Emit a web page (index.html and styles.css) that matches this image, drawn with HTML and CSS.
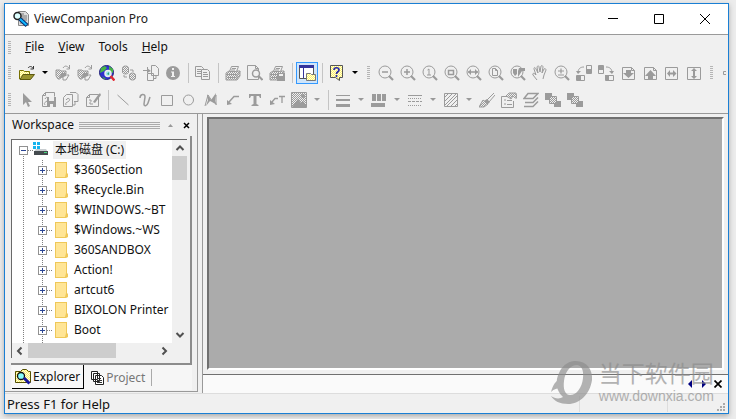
FILE: index.html
```html
<!DOCTYPE html>
<html lang="en">
<head>
<meta charset="utf-8">
<title>ViewCompanion Pro</title>
<link rel="stylesheet" href="styles.css">
</head>
<body>
<svg class="sprite" aria-hidden="true">
  <defs>
    <pattern id="dots" width="2" height="2" patternUnits="userSpaceOnUse"><path d="M0 0h1v1H0zM1 1h1v1H1z" fill="#9b9b9b"/></pattern>
    <pattern id="ydots" width="2" height="2" patternUnits="userSpaceOnUse"><path d="M0 0h2v2H0z" fill="#fffde0"/><path d="M0 0h1v1H0zM1 1h1v1H1z" fill="#fff46a"/></pattern>
    <symbol id="lens" viewBox="0 0 16 16"><circle cx="7" cy="7" r="6" fill="none" stroke="currentColor"/><path d="M11 11l4 4" stroke="currentColor" stroke-width="2.2"/></symbol>
    <symbol id="app" viewBox="0 0 16 16"><path d="M5.500.5h7l3 3v11h-10z" fill="#ddd" stroke="#888"/><path d="M8 3h3M8 5h6M9 7h5M11 9h3M7 12h3" stroke="#777"/><circle cx="4.500" cy="5" r="3.500" fill="#dff" stroke="#222" stroke-width="1.500"/><path d="M7 8l7 6.500" stroke="#002a70" stroke-width="4"/><path d="M7 8l6.500 6" stroke="#10b8ff" stroke-width="2"/></symbol>
    <symbol id="open" viewBox="0 0 16 16"><path d="M.5 14V5.500h4l1 1h5v3" fill="url(#ydots)" stroke="#777000"/><path d="M1 14.500l3-5h11.500l-4 5z" fill="#9a9430" stroke="#5c5810"/><path d="M9 3c1.500-2 4-2 5 .5M14.500 1v3h-3" fill="none" stroke="#333"/></symbol>
    <symbol id="files" viewBox="0 0 16 16"><path d="M1 5h4l1 1h5v3H7l-2 5H3l-2-3z" fill="url(#dots)" stroke="currentColor"/><path d="M5 10h9l-3 5H8V12H5zM8 3c2-3 4-2 6 0M14.500 0v4h-3" fill="none" stroke="currentColor"/><path d="M6 8h5v3l-5 2z" fill="currentColor"/></symbol>
    <symbol id="globe" viewBox="0 0 16 16"><circle cx="7.500" cy="7.500" r="7" fill="#2f2fd0" stroke="#222276"/><path d="M2 3l4-2 2 2-3 3-4 2zM10 1l4 3v4l-4-2z" fill="#45b545"/><path d="M3 11l4 3H5z" fill="#40b040"/><circle cx="9" cy="8.500" r="3" fill="#9fe8ef" stroke="#eee" stroke-width="1.500"/><path d="M8 9l2-2v3z" fill="#2aa070"/><path d="M11.500 11l4 4.500" stroke="#e22b35" stroke-width="2.500"/></symbol>
    <symbol id="cups" viewBox="0 0 16 16"><path d="M1.500 2.500c1-2 5-2 6 0v5c-1 2-5 2-6 0zM8.500 9.500c1-2 5-2 6 0v4c-1 2-5 2-6 0z" fill="url(#dots)" stroke="currentColor"/><path d="M3 10v2h3M9 5h3v2" fill="none" stroke="currentColor"/></symbol>
    <symbol id="merge" viewBox="0 0 16 16"><path d="M8.500.5h4l3 3v7h-7zM4.500 8.500h6v7h-6zM0 5.500h7M4.500 2v6M10 13.500h3v-3" fill="none" stroke="currentColor"/><path d="M4 3l4 3-4 2z" fill="currentColor"/></symbol>
    <symbol id="info" viewBox="0 0 16 16"><circle cx="8" cy="8" r="7" fill="currentColor"/><path d="M7 3h2v2H7zM6 6.500h3V11h1v1H6v-1h1V7.500H6z" fill="#f0f0f0"/></symbol>
    <symbol id="copy" viewBox="0 0 16 16"><path d="M.5 1.500h6l2 2v8h-8z" fill="#f0f0f0" stroke="currentColor"/><path d="M2 4.500h4M2 6.500h4M2 8.500h4" stroke="currentColor"/><path d="M6.500 4.500h6l2 2v8h-8z" fill="#f0f0f0" stroke="currentColor"/><path d="M8 7.500h4M8 9.500h5M8 11.500h5" stroke="currentColor"/></symbol>
    <symbol id="print" viewBox="0 0 16 16"><path d="M1 8l3-2h11v5l-3 4H1z" fill="url(#dots)" stroke="currentColor"/><path d="M4.500 6.500l2-5h7l-2 5z" fill="#f0f0f0" stroke="currentColor"/><path d="M7 3.500h4M6 5h4M1 9.500h11v5M12 9.500l3-3M2 12.500h9" stroke="currentColor" fill="none"/></symbol>
    <symbol id="preview" viewBox="0 0 16 16"><path d="M.5.5h8l3 3v11H.5zM8.500.5v3h3" fill="none" stroke="currentColor"/><circle cx="9" cy="8.500" r="3.500" fill="#f0f0f0" stroke="currentColor" stroke-width="1.500"/><path d="M11.500 11l4 4" stroke="currentColor" stroke-width="2"/></symbol>
    <symbol id="workspace" viewBox="0 0 18 16"><path d="M1.500.5h14v13h-14z" fill="#fff" stroke="#555"/><path d="M1 0h15v3H1z" fill="#34349c"/><path d="M5.500 3v10" stroke="#34349c"/><path d="M8.500 8.500h4l1 1h4v6h-9z" fill="url(#ydots)" stroke="#777"/></symbol>
    <symbol id="help" viewBox="0 0 16 16"><path d="M1.500.5h12v12h-3v3l-4-3h-5z" fill="url(#ydots)" stroke="#555"/><path d="M5 5c0-3 5-3 5 0 0 2-2.500 1.500-2.500 4M7.500 10v2" fill="none" stroke="#2828a8" stroke-width="1.700"/></symbol>
    <symbol id="hand" viewBox="0 0 16 16"><path d="M5 15l-4-5c-1-2 1-2 2-1l1 1-2-6c0-2 1-2 2 0l2 4-1-6c1-2 2-1 2 0l1 5 1-6c1-1 2 0 2 1l-1 6 2-4c1-1 2 0 2 1l-2 5-1 4" fill="none" stroke="currentColor"/></symbol>
    <symbol id="rotl" viewBox="0 0 16 16"><path d="M10.500.5h5v8h-5zM.5 10.500h8v5h-8zM2 8c0-4 2-6 6-6" fill="none" stroke="currentColor"/><path d="M10 4h5v4h-5zM1 10h4v5H1zM0 6h5L2 9z" fill="currentColor"/></symbol>
    <symbol id="rotr" viewBox="0 0 16 16"><path d="M.5.500h5v8h-5zM7.500 10.500h8v5h-8zM14 8c0-4-2-6-6-6" fill="none" stroke="currentColor"/><path d="M1 1h5v4H1zM7 10h4v5H7zM11 6h5l-2 3z" fill="currentColor"/></symbol>
    <symbol id="down" viewBox="0 0 16 16"><path d="M2.500 2.500h9l3 3v9h-12zM11.500 2.500v3h3" fill="none" stroke="currentColor"/><path d="M6 5h5v3h3l-5.500 5L3 8h3z" fill="currentColor"/></symbol>
    <symbol id="up" viewBox="0 0 16 16"><path d="M2.500 2.500h9l3 3v9h-12zM11.500 2.500v3h3" fill="none" stroke="currentColor"/><path d="M6 14h5v-3h3L8.500 5 3 11h3z" fill="currentColor"/></symbol>
    <symbol id="fitw" viewBox="0 0 16 16"><path d="M1.500 2.500h12v12h-12z" fill="none" stroke="currentColor"/><path d="M3 8.500L6 5v2.500h3V5l3.500 3.500L9 12V9.500H6V12z" fill="currentColor"/></symbol>
    <symbol id="fith" viewBox="0 0 16 16"><path d="M1.500 2.500h13v12h-13z" fill="none" stroke="currentColor"/><path d="M8 3l3 3H9v5h2l-3 3-3-3h2V6H5z" fill="currentColor"/></symbol>
    <symbol id="cursor" viewBox="0 0 16 16"><path d="M4 1v12l3-3 2 5 2-1-2-4h4z" fill="currentColor"/></symbol>
    <symbol id="savepage" viewBox="0 0 16 16"><path d="M1.500 14.500v-11l3-3h9v4M4.500.5v3h-3M1.500 14.500H6M4 7c2-4 5 0 2 2s-3 2-2 4" fill="none" stroke="currentColor"/><path d="M6 5h9v10H6z" fill="currentColor"/><path d="M8 5h5v4H8zM9 12h3v3H9z" fill="#eee"/></symbol>
    <symbol id="pages" viewBox="0 0 16 16"><path d="M.5 14.500v-9l3-3h6v12zM7 .5h6l2 2v7h-4M3 8c2-3 5-1 3 1s-4 1-3 4M12 10v3h-2" fill="none" stroke="currentColor"/></symbol>
    <symbol id="editpage" viewBox="0 0 16 16"><path d="M1.500 14.500v-9l3-3h9v12zM4.500 2.500v3h-3M4 8h2c1 2-2 2-1 4h3" fill="none" stroke="currentColor"/><path d="M8 10l5-7 2-2 1 2-6 8z" fill="currentColor"/></symbol>
    <symbol id="line" viewBox="0 0 16 16"><path d="M2.500 3l11 10" stroke="currentColor"/></symbol>
    <symbol id="curve" viewBox="0 0 16 16"><path d="M3 6c0-4 5-5 5-1L7 12c0 3 3 2 4-1l2-6" fill="none" stroke="currentColor" stroke-width="1.500"/></symbol>
    <symbol id="rect" viewBox="0 0 16 16"><path d="M2.500 3.500h11v10h-11z" fill="none" stroke="currentColor"/></symbol>
    <symbol id="ellipse" viewBox="0 0 16 16"><circle cx="7.500" cy="8" r="5" fill="none" stroke="currentColor"/></symbol>
    <symbol id="poly" viewBox="0 0 16 16"><path d="M2 14L5 3l4 6 4-6v10" fill="none" stroke="currentColor"/><path d="M4 2l4 6 5-7-1 8 2 4-5-3-2-1-4 5 2-6z" fill="currentColor"/></symbol>
    <symbol id="leader" viewBox="0 0 16 16"><path d="M14 4.500H9L4 10" fill="none" stroke="currentColor" stroke-width="1.500"/><path d="M2 13V8l5 4z" fill="currentColor"/></symbol>
    <symbol id="text" viewBox="0 0 16 16"><path d="M2 2h12v4h-1l-1-2H9.500v8l2 1v1h-7v-1l2-1V4H4L3 6H2z" fill="currentColor"/></symbol>
    <symbol id="leadert" viewBox="0 0 16 16"><path d="M9 6.500H6L3 10M10 4.500h6M13 4v7" fill="none" stroke="currentColor" stroke-width="1.300"/><path d="M1 13V8l5 4z" fill="currentColor"/></symbol>
    <symbol id="image" viewBox="0 0 16 16"><path d="M.5.500h15v15H.5z" fill="url(#dots)" stroke="currentColor"/><path d="M1 15l6-8 3 4 2-2 3 4v2z" fill="currentColor"/><circle cx="12" cy="4" r="2" fill="currentColor"/></symbol>
    <symbol id="lines" viewBox="0 0 16 16"><path d="M1 3.500h14" stroke="currentColor"/><path d="M1 8h14" stroke="currentColor" stroke-width="2"/><path d="M1 13.500h14" stroke="currentColor" stroke-width="3"/></symbol>
    <symbol id="bars" viewBox="0 0 16 16"><path d="M1 2h4v7H1zM6 2h4v7H6zM11 2h4v7h-4zM0 11h14v4H0z" fill="currentColor"/></symbol>
    <symbol id="dashes" viewBox="0 0 16 16"><path d="M1 3.500h14" stroke="currentColor"/><path d="M1 6.500h14M1 13.500h14" stroke="currentColor" stroke-dasharray="1 1"/><path d="M1 9.500h14" stroke="currentColor" stroke-dasharray="3 1"/></symbol>
    <symbol id="hatch" viewBox="0 0 16 16"><path d="M1.500 1.500h13v13h-13zM2 5l3-3M2 9l7-7M2 13L13 2M4 14L14 4M8 14l6-6M12 14l2-2" fill="none" stroke="currentColor"/></symbol>
    <symbol id="brush" viewBox="0 0 16 16"><path d="M8 8l7-7M10 10l6-7" stroke="currentColor"/><path d="M8 7l3 3-2 2-4-3z" fill="currentColor"/><path d="M4 8l5 4-4 3H0z" fill="url(#dots)" stroke="currentColor"/></symbol>
    <symbol id="props" viewBox="0 0 16 16"><path d="M6 4.500H.5v11h12V9M3 8h2M6 8.500h5M3 12h2M6 12.500h5" fill="none" stroke="currentColor"/><path d="M5 4l3-3h7l1 5h-2l-2-2-2 3-3-2z" fill="url(#dots)" stroke="currentColor"/></symbol>
    <symbol id="layers" viewBox="0 0 16 16"><path d="M5 1.500h10l-5 5H1zM2 10.500h8l5-5M1 14.500h9l5-5" fill="none" stroke="currentColor" stroke-width="1.500"/></symbol>
    <symbol id="stack" viewBox="0 0 16 16"><path d="M0 1h7v7H0zM9 9h7v6H9z" fill="currentColor"/><path d="M4.500 4.500h7v7h-7z" fill="#eee"/><path d="M4.500 4.500h7v7h-7z" fill="url(#dots)" stroke="currentColor"/></symbol>
    <symbol id="drive" viewBox="0 0 16 16"><path d="M0 0h3v3H0zM4 0h3v3H4zM0 4h3v3H0zM4 4h3v3H4z" fill="#17b4ee"/><path d="M3 7h10l2 3H1z" fill="#c8cdd0"/><path d="M1 9h14v4H1z" fill="#454b4f"/><path d="M11 10h3v1h-3z" fill="#49d67e"/></symbol>
    <symbol id="folder" viewBox="0 0 13 16"><path d="M0 0h12v11l1 1v3l-2 1H0z" fill="#efc858"/><path d="M1 1h10v10l-1 4H1z" fill="#ffe596"/></symbol>
    <symbol id="explore" viewBox="0 0 16 16"><path d="M.5 13.500V2.500h5l2-2h4l2 2h2v11z" fill="url(#ydots)" stroke="#555000"/><circle cx="6" cy="7" r="3.500" fill="#8ff" stroke="#111" stroke-width="1.300"/><path d="M9 9l5.500 5.500" stroke="#1515a0" stroke-width="3"/></symbol>
    <symbol id="project" viewBox="0 0 13 14"><path d="M.5.500h6v8h-6zM2.500 2.500h6v8h-6zM4.500 4.500h6l2 2v7h-8z" fill="#fff" stroke="#222"/><path d="M6 7.500h4M6 9.500h5M6 11.500h5" stroke="#333"/></symbol>
  </defs>
</svg>
<div class="window">
  <header class="titlebar">
    <svg class="icon"><use href="#app"/></svg>
    <h1>ViewCompanion Pro</h1>
    <button class="caption" aria-label="Minimize"><svg viewBox="0 0 10 10"><path d="M0 4.500h10"/></svg></button>
    <button class="caption" aria-label="Maximize"><svg viewBox="0 0 10 10"><path d="M.5.500h9v9h-9z"/></svg></button>
    <button class="caption" aria-label="Close"><svg viewBox="0 0 10 10"><path d="M0 0l10 10M10 0L0 10"/></svg></button>
  </header>

  <nav class="menubar">
    <span class="grip"></span>
    <button><u>F</u>ile</button>
    <button><u>V</u>iew</button>
    <button>Tools</button>
    <button><u>H</u>elp</button>
  </nav>

  <div class="toolbar" role="toolbar" aria-label="Standard">
    <span class="grip"></span>
    <button class="tool" aria-label="Open"><svg class="icon"><use href="#open"/></svg></button>
    <button class="drop dark" aria-label="Recent files"></button>
    <button class="tool" aria-label="Previous file"><svg class="icon"><use href="#files"/></svg></button>
    <button class="tool" aria-label="Next file"><svg class="icon"><use href="#files"/></svg></button>
    <button class="tool" aria-label="Browse web"><svg class="icon"><use href="#globe"/></svg></button>
    <button class="tool" aria-label="Convert"><svg class="icon"><use href="#cups"/></svg></button>
    <button class="tool" aria-label="Merge"><svg class="icon"><use href="#merge"/></svg></button>
    <button class="tool" aria-label="Information"><svg class="icon"><use href="#info"/></svg></button>
    <span class="sep"></span>
    <button class="tool" aria-label="Copy"><svg class="icon"><use href="#copy"/></svg></button>
    <span class="sep"></span>
    <button class="tool" aria-label="Print"><svg class="icon"><use href="#print"/></svg></button>
    <button class="tool" aria-label="Print preview"><svg class="icon"><use href="#preview"/></svg></button>
    <button class="tool" aria-label="Print setup"><svg class="icon" viewBox="0 0 16 16"><use href="#print"/><path d="M8 8h8v8H8z" fill="currentColor"/><path d="M10 9h4v2h-4z" fill="#eee"/></svg></button>
    <span class="sep"></span>
    <button class="tool pressed" aria-label="Workspace" aria-pressed="true"><svg class="icon wide"><use href="#workspace"/></svg></button>
    <span class="sep"></span>
    <button class="tool" aria-label="Help"><svg class="icon"><use href="#help"/></svg></button>
    <button class="drop dark" aria-label="Help options"></button>
    <span class="grip inner"></span>
    <button class="tool" aria-label="Zoom out"><svg class="icon" viewBox="0 0 16 16"><use href="#lens"/><path d="M4 7h6" stroke="currentColor" stroke-width="1.500"/></svg></button>
    <button class="tool" aria-label="Zoom in"><svg class="icon" viewBox="0 0 16 16"><use href="#lens"/><path d="M4 7h6M7 4v6" stroke="currentColor" stroke-width="1.500"/></svg></button>
    <button class="tool" aria-label="Actual size"><svg class="icon" viewBox="0 0 16 16"><use href="#lens"/><path d="M5.500 5L7 4v6M5 10h4" fill="none" stroke="currentColor"/></svg></button>
    <button class="tool" aria-label="Zoom window"><svg class="icon" viewBox="0 0 16 16"><use href="#lens"/><path d="M4.500 5.500h5v4h-5z" fill="none" stroke="currentColor" stroke-width="1.500"/></svg></button>
    <button class="tool" aria-label="Zoom width"><svg class="icon" viewBox="0 0 16 16"><use href="#lens"/><path d="M2 7h10" stroke="currentColor" stroke-width="1.500"/><path d="M2 7l3-3v6zM12 7L9 4v6z" fill="currentColor"/></svg></button>
    <button class="tool" aria-label="Zoom page"><svg class="icon" viewBox="0 0 16 16"><use href="#lens"/><path d="M4.500 3.500h3l2 2v5h-5zM7.500 3.500v2h2" fill="none" stroke="currentColor"/></svg></button>
    <button class="tool" aria-label="Previous zoom"><svg class="icon" viewBox="0 0 16 16"><use href="#lens"/><path d="M3 4h4v5l-2 2-2-3zM9 3h6v3h-3l-4 6V6z" fill="currentColor"/></svg></button>
    <button class="tool" aria-label="Pan"><svg class="icon"><use href="#hand"/></svg></button>
    <button class="tool" aria-label="Dynamic zoom"><svg class="icon" viewBox="0 0 16 16"><use href="#lens"/><path d="M4 6h6M7 3.500v5M4 10h6" stroke="currentColor" stroke-width="1.200"/></svg></button>
    <button class="tool" aria-label="Rotate left"><svg class="icon"><use href="#rotl"/></svg></button>
    <button class="tool" aria-label="Rotate right"><svg class="icon"><use href="#rotr"/></svg></button>
    <button class="tool" aria-label="Next page"><svg class="icon"><use href="#down"/></svg></button>
    <button class="tool" aria-label="Previous page"><svg class="icon"><use href="#up"/></svg></button>
    <button class="tool" aria-label="Fit width"><svg class="icon"><use href="#fitw"/></svg></button>
    <button class="tool" aria-label="Fit height"><svg class="icon"><use href="#fith"/></svg></button>
    <span class="grip inner"></span>
    <svg class="overflow" viewBox="0 0 4 16"><path d="M4 6.500H1.500v3H4" fill="none" stroke="currentColor"/></svg>
  </div>

  <div class="toolbar last" role="toolbar" aria-label="Markup">
    <span class="grip"></span>
    <button class="tool" aria-label="Select"><svg class="icon"><use href="#cursor"/></svg></button>
    <button class="tool" aria-label="Save markup"><svg class="icon"><use href="#savepage"/></svg></button>
    <button class="tool" aria-label="Markup files"><svg class="icon"><use href="#pages"/></svg></button>
    <button class="tool" aria-label="Edit markup"><svg class="icon"><use href="#editpage"/></svg></button>
    <span class="sep"></span>
    <button class="tool" aria-label="Line"><svg class="icon"><use href="#line"/></svg></button>
    <button class="tool" aria-label="Curve"><svg class="icon"><use href="#curve"/></svg></button>
    <button class="tool" aria-label="Rectangle"><svg class="icon"><use href="#rect"/></svg></button>
    <button class="tool" aria-label="Ellipse"><svg class="icon"><use href="#ellipse"/></svg></button>
    <button class="tool" aria-label="Polygon"><svg class="icon"><use href="#poly"/></svg></button>
    <button class="tool" aria-label="Arrow"><svg class="icon"><use href="#leader"/></svg></button>
    <button class="tool" aria-label="Text"><svg class="icon"><use href="#text"/></svg></button>
    <button class="tool" aria-label="Text leader"><svg class="icon"><use href="#leadert"/></svg></button>
    <button class="tool" aria-label="Image"><svg class="icon"><use href="#image"/></svg></button>
    <button class="drop" aria-label="Image options"></button>
    <span class="sep"></span>
    <button class="tool" aria-label="Line width"><svg class="icon"><use href="#lines"/></svg></button>
    <button class="drop" aria-label="Line width options"></button>
    <button class="tool" aria-label="Colour"><svg class="icon"><use href="#bars"/></svg></button>
    <button class="drop" aria-label="Colour options"></button>
    <button class="tool" aria-label="Line style"><svg class="icon"><use href="#dashes"/></svg></button>
    <button class="drop" aria-label="Line style options"></button>
    <button class="tool" aria-label="Fill"><svg class="icon"><use href="#hatch"/></svg></button>
    <button class="drop" aria-label="Fill options"></button>
    <button class="tool" aria-label="Brush"><svg class="icon"><use href="#brush"/></svg></button>
    <button class="tool" aria-label="Properties"><svg class="icon"><use href="#props"/></svg></button>
    <button class="tool" aria-label="Layers"><svg class="icon"><use href="#layers"/></svg></button>
    <button class="tool" aria-label="Bring forward"><svg class="icon"><use href="#stack"/></svg></button>
    <button class="tool" aria-label="Send backward"><svg class="icon"><use href="#stack"/></svg></button>
  </div>

  <main class="content">
    <aside class="dock">
      <div class="dock-head">
        <h2>Workspace</h2>
        <span class="dock-grip"></span>
        <button aria-label="Collapse"><svg viewBox="0 0 7 7"><path d="M1 5l2.500-3L6 5z" fill="#999"/></svg></button>
        <button aria-label="Close workspace"><svg viewBox="0 0 7 7"><path d="M1 1l5 5M6 1L1 6" stroke="#000" stroke-width="1.500"/></svg></button>
      </div>
      <div class="frame">
        <div class="tree">
          <ul>
            <li class="root"><button class="toggle" aria-label="Collapse drive"></button><i class="stub"></i><svg class="icon"><use href="#drive"/></svg><span>本地磁盘 (C:)</span></li>
            <li><button class="toggle plus" aria-label="Expand"></button><i class="stub"></i><svg class="folder"><use href="#folder"/></svg><span>$360Section</span></li>
            <li><button class="toggle plus" aria-label="Expand"></button><i class="stub"></i><svg class="folder"><use href="#folder"/></svg><span>$Recycle.Bin</span></li>
            <li><button class="toggle plus" aria-label="Expand"></button><i class="stub"></i><svg class="folder"><use href="#folder"/></svg><span>$WINDOWS.~BT</span></li>
            <li><button class="toggle plus" aria-label="Expand"></button><i class="stub"></i><svg class="folder"><use href="#folder"/></svg><span>$Windows.~WS</span></li>
            <li><button class="toggle plus" aria-label="Expand"></button><i class="stub"></i><svg class="folder"><use href="#folder"/></svg><span>360SANDBOX</span></li>
            <li><button class="toggle plus" aria-label="Expand"></button><i class="stub"></i><svg class="folder"><use href="#folder"/></svg><span>Action!</span></li>
            <li><button class="toggle plus" aria-label="Expand"></button><i class="stub"></i><svg class="folder"><use href="#folder"/></svg><span>artcut6</span></li>
            <li><button class="toggle plus" aria-label="Expand"></button><i class="stub"></i><svg class="folder"><use href="#folder"/></svg><span>BIXOLON Printer</span></li>
            <li><button class="toggle plus" aria-label="Expand"></button><i class="stub"></i><svg class="folder"><use href="#folder"/></svg><span>Boot</span></li>
          </ul>
          <div class="vscroll">
            <button aria-label="Scroll up"><svg viewBox="0 0 10 10"><path d="M1.500 7L5 3.500 8.500 7"/></svg></button>
            <span class="thumb"></span>
            <button aria-label="Scroll down"><svg viewBox="0 0 10 10"><path d="M1.500 3L5 6.500 8.500 3"/></svg></button>
          </div>
          <div class="hscroll">
            <button aria-label="Scroll left"><svg viewBox="0 0 10 10"><path d="M6.500 1.500L3 5l3.500 3.500"/></svg></button>
            <span class="thumb"></span>
            <button aria-label="Scroll right"><svg viewBox="0 0 10 10"><path d="M3.500 1.500L7 5 3.500 8.500"/></svg></button>
          </div>
          <span class="corner"></span>
        </div>
      </div>
      <div class="tabs" role="tablist">
        <button class="tab active" role="tab" aria-selected="true"><svg class="icon"><use href="#explore"/></svg>Explorer</button>
        <button class="tab" role="tab" aria-selected="false"><svg class="icon small"><use href="#project"/></svg>Project</button>
      </div>
    </aside>
    <section class="workarea">
      <div class="canvas"></div>
      <div class="doctabs">
        <button aria-label="Previous document"><svg viewBox="0 0 8 8"><path d="M6 0v8L2 4z" fill="#000080"/></svg></button>
        <button aria-label="Next document"><svg viewBox="0 0 8 8"><path d="M2 0v8l4-4z" fill="#000080"/></svg></button>
        <button aria-label="Close document"><svg viewBox="0 0 8 8"><path d="M.5.500l7 7M7.500.500l-7 7" stroke="#000" stroke-width="1.700"/></svg></button>
      </div>
    </section>
  </main>

  <footer class="statusbar">
    <span class="message">Press F1 for Help</span>
    <span class="pane"></span>
    <span class="pane end"><svg viewBox="0 0 9 9"><path d="M6 0h2v2H6zM3 3h2v2H3zM6 3h2v2H6zM0 6h2v2H0zM3 6h2v2H3zM6 6h2v2H6z" fill="#aaa"/></svg></span>
  </footer>
</div>
<div class="watermark">
  <svg viewBox="0 0 44 46"><path fill-rule="evenodd" d="M24 1C36 0 43 9 42 20 40 34 30 44 18 44 10 44 4 41 1 36c4 3 9 3 12 1C6 31 5 21 9 13 12 6 17 2 24 1zm3 4c-7 0-12 7-13 16-1 8 1 13 5 14 7 1 13-7 14-17 1-8-2-13-6-13z" fill="currentColor"/><path d="M1 32c2-8 5-11 9-13l1 9c-4 0-7 1-10 4z" fill="currentColor"/></svg>
  <div><strong>当下软件园</strong><span>www.downxia.com</span></div>
</div>
</body>
</html>
```
FILE: styles.css
```css
* { box-sizing: border-box; }
body {
  margin: 0;
  height: 100vh;
  padding: 3px 7px 5px 4px;
  background: #ececec;
  color: #111;
  font: 12px/18px "Noto Sans", "Noto Sans CJK SC", sans-serif;
  overflow: hidden;
}
button { margin: 0; padding: 0; border: 0; background: none; color: inherit; font: inherit; }
h1, h2, ul { margin: 0; padding: 0; font: inherit; }
svg { display: block; flex: none; }
.sprite { position: absolute; width: 0; height: 0; }
.icon { width: 16px; height: 16px; }
.icon.wide { width: 18px; }
.icon.small { width: 13px; height: 14px; }

.window {
  display: flex;
  flex-direction: column;
  height: 100%;
  border: 1px solid #1a7fd4;
  background: #f0f0f0;
  box-shadow: 0 2px 5px #aaa;
}
.titlebar { display: flex; align-items: center; flex: none; height: 31px; padding-left: 8px; background: #fff; border-bottom: 1px solid #9a9a9a; }
.titlebar h1 { flex: 1; margin-left: 5px; color: #222; }
.caption { display: grid; place-items: center; width: 46px; height: 30px; }
.caption svg { width: 10px; height: 10px; fill: none; stroke: #000; }

.menubar { display: flex; align-items: center; flex: none; height: 24px; padding-left: 3px; }
.menubar .grip { margin-right: 7px; }
.menubar button { padding: 0 7px; }
.toolbar { display: flex; align-items: center; flex: none; height: 27px; padding-left: 3px; color: #9b9b9b; }
.toolbar.last { height: 28px; border-bottom: 1px solid #999; }
.grip { flex: none; width: 3px; height: 13px; margin-right: 5px; background: repeating-linear-gradient(#b5b5b5 0 1px, transparent 1px 2px); }
.grip.inner { margin: 0 5px; }
.tool { display: grid; place-items: center; flex: none; width: 22px; height: 22px; }
.pressed { border: 1px solid #3399ff; background: #cfe5fa; }
.drop { flex: none; width: 14px; height: 22px; }
.drop::before { content: ""; display: block; margin: 0 auto; width: 0; border: 3px solid transparent; border-top-color: #999; border-bottom: 0; }
.drop.dark::before { border-top-color: #000; }
.sep { flex: none; width: 8px; height: 20px; background: linear-gradient(#c4c4c4, #c4c4c4) center / 1px 100% no-repeat; }
.overflow { width: 4px; height: 16px; margin-left: 4px; }

.content { display: flex; flex: 1; min-height: 0; }
.dock { display: flex; flex-direction: column; flex: none; width: 193px; border-right: 1px solid #999; border-bottom: 1px solid #999; margin-bottom: 1px; padding: 0 5px 1px 6px; }
.dock-head { display: flex; align-items: center; flex: none; height: 22px; gap: 5px; }
.dock-head h2 { margin-left: 1px; }
.dock-grip { flex: 1; height: 7px; background: repeating-linear-gradient(#aaa 0 1px, transparent 1px 2px); }
.dock-head button { display: grid; place-items: center; width: 11px; height: 16px; }
.dock-head svg { width: 7px; height: 7px; }
.frame { flex: 1; min-height: 0; padding: 3px 3px 5px 0; border-right: 2px solid #8c8c8c; border-bottom: 2px solid #8c8c8c; }
.tree { display: grid; grid-template: minmax(0, 1fr) 15px / minmax(0, 1fr) 15px; height: 100%; border-top: 1px solid #696969; border-left: 1px solid #696969; background: #fff; }
.tree ul {
  overflow: hidden;
  list-style: none;
  background:
    repeating-linear-gradient(#808080 0 1px, transparent 1px 2px) 11px 14px / 1px 100% no-repeat,
    repeating-linear-gradient(#808080 0 1px, transparent 1px 2px) 30px 20px / 1px 100% no-repeat;
}
.tree li { display: flex; align-items: center; height: 20px; padding-left: 26px; white-space: nowrap; }
.tree li.root { padding-left: 7px; }
.root span { padding: 0 2px; margin-left: 4px; background: #f0f0f0; }
.toggle { flex: none; width: 9px; height: 9px; border: 1px solid #919191; background: linear-gradient(#2b4594, #2b4594) center / 5px 1px no-repeat, #fff; }
.toggle.plus { background: linear-gradient(#2b4594, #2b4594) center / 5px 1px no-repeat, linear-gradient(#2b4594, #2b4594) center / 1px 5px no-repeat, #fff; }
.stub { flex: none; width: 5px; height: 1px; background: repeating-linear-gradient(90deg, #808080 0 1px, transparent 1px 2px); }
.folder { width: 13px; height: 16px; margin: 0 6px 0 3px; }
.vscroll, .hscroll { display: flex; background: #f0f0f0; }
.vscroll { flex-direction: column; }
.vscroll button, .hscroll button { display: grid; place-items: center; flex: none; width: 16px; height: 16px; }
.vscroll button:last-child, .hscroll button:last-child { margin: auto 0 0 auto; }
.vscroll svg, .hscroll svg { width: 10px; height: 10px; fill: none; stroke: #505050; stroke-width: 2; }
.thumb { background: #cdcdcd; }
.vscroll .thumb { height: 12%; }
.hscroll .thumb { width: 55%; }
.corner { background: #f0f0f0; }
.tabs { display: flex; flex: none; height: 25px; background: #f6f6f6; }
.tab { display: flex; align-items: center; gap: 2px; height: 24px; padding: 0 6px 0 3px; color: #777; border-right: 1px solid #aaa; }
.tab:not(.active) { height: 17px; margin: 4px 0 0 3px; padding-left: 4px; }
.tab.active { margin-left: 1px; padding-right: 3px; color: #111; background: #f8f8f8; border-right: 1px solid #000; border-bottom: 1px solid #000; }

.workarea { display: flex; flex-direction: column; flex: 1; min-width: 0; margin-left: 4px; border-left: 1px solid #999; }
.canvas { flex: 1; margin: 3px 4px 4px 4px; border: 2px solid #707070; border-right-color: #fff; border-bottom-color: #fff; background: #ababab; }
.doctabs { display: flex; flex: none; align-items: center; justify-content: flex-end; gap: 6px; height: 19px; padding-right: 6px; border-top: 1px solid #707070; background: #fafafa; }
.doctabs svg { width: 8px; height: 8px; }
.statusbar { display: flex; align-items: center; flex: none; height: 20px; padding-left: 2px; border-top: 1px solid #ddd; }
.message { flex: 1; font-size: 13px; }
.pane { width: 88px; height: 16px; border-left: 1px solid #ddd; }
.pane.end { display: flex; justify-content: flex-end; align-items: flex-end; width: 61px; padding-right: 2px; }
.pane svg { width: 9px; height: 9px; }
.caption, .doctabs button { flex: none; }

.watermark { position: absolute; right: 22px; bottom: 13px; display: flex; gap: 5px; color: #8c8c8c; opacity: .65; pointer-events: none; }
.watermark svg { width: 44px; height: 46px; }
.watermark div { display: flex; flex-direction: column; font-family: "Liberation Sans", "Noto Sans CJK SC", sans-serif; }
.watermark strong { font-size: 23px; font-weight: 400; line-height: 28px; }
.watermark span { font-size: 14px; line-height: 16px; }
```
